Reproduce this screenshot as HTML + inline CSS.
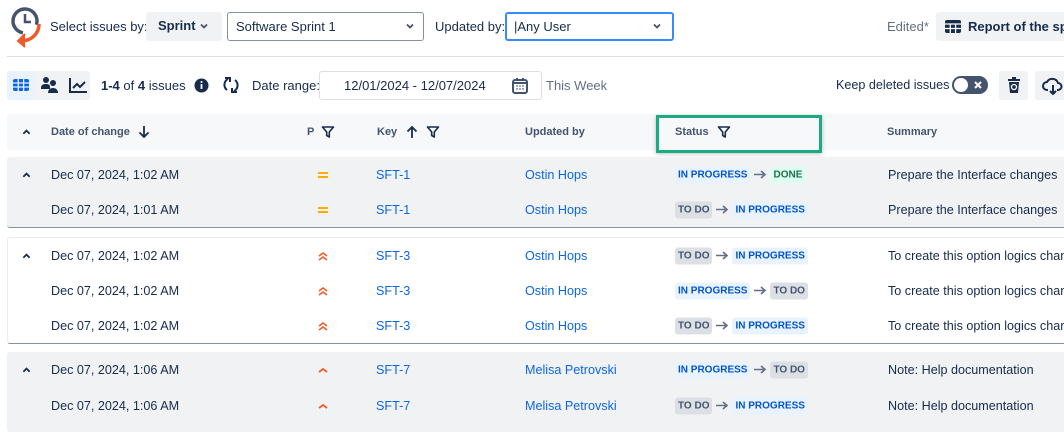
<!DOCTYPE html><html><head><style>
*{box-sizing:border-box;margin:0;padding:0}
body{width:1064px;height:420px;overflow:hidden;background:#fff;font-family:"Liberation Sans",sans-serif;font-size:13px;color:#172b4d;position:relative}
.a{position:absolute;white-space:nowrap}
.btn{background:#f1f2f4;border-radius:3px}
.sel{border:1px solid #8590a2;border-radius:3px;background:#fff}
.hd{font-size:11px;font-weight:bold;color:#44546f}
.grp{position:absolute;left:7px;width:1070px;border-radius:3px}
.row{position:absolute;left:0;width:100%;height:35px;font-size:12.6px}
.row>span{position:absolute;top:50%;transform:translateY(-50%);white-space:nowrap;display:flex;align-items:center}
.lnk{color:#0c66e4}
.lz{font-size:10px;font-weight:bold;padding:3px 3px;border-radius:3px}
.ip{background:#e9f2ff;color:#0055cc}
.td{background:#dcdfe4;color:#44546f}
.dn{background:#dcfff1;color:#216e4e}
.arr{margin:0 3px}
svg{display:block;flex-shrink:0}
</style></head><body>
<svg width="0" height="0" style="position:absolute"><defs>
<symbol id="up" viewBox="0 0 10 6"><path d="M1.5 5L5 1.5 8.5 5" stroke="#172b4d" stroke-width="2" fill="none"/></symbol>
<symbol id="dd" viewBox="0 0 10 6"><path d="M2 1.5L5 4.5 8 1.5" stroke="#44546f" stroke-width="1.8" fill="none"/></symbol>
<symbol id="flt" viewBox="0 0 14 14"><path d="M1.5 2h11L8.3 7v5L5.7 10.5V7z" stroke="#172b4d" stroke-width="1.6" fill="none" stroke-linejoin="round"/></symbol>
<symbol id="med" viewBox="0 0 12 10"><path d="M1 3h10M1 7h10" stroke="#ffab00" stroke-width="2"/></symbol>
<symbol id="hi" viewBox="0 0 12 10"><path d="M2 5l4-3 4 3M2 9l4-3 4 3" stroke="#f15b2a" stroke-width="1.6" fill="none"/></symbol>
<symbol id="hi1" viewBox="0 0 12 10"><path d="M2 7l4-3 4 3" stroke="#f15b2a" stroke-width="1.8" fill="none"/></symbol>
<symbol id="ar" viewBox="0 0 14 10"><path d="M1 5h11M8 1.5L12 5 8 8.5" stroke="#626f86" stroke-width="1.6" fill="none"/></symbol>
</defs></svg>
<svg class="a" style="left:8px;top:4px" width="36" height="44" viewBox="0 0 36 44"><circle cx="17" cy="17" r="12" fill="none" stroke="#44546f" stroke-width="3.5" stroke-dasharray="58 30" transform="rotate(100 17 17)"/><path d="M17 10v8h6" fill="none" stroke="#44546f" stroke-width="2.5"/><path d="M31 20c0 10-8 17-18 17" fill="none" stroke="#f05a28" stroke-width="3.5"/><path d="M17 30l-7 7 7 6" fill="#f05a28" stroke="#f05a28" stroke-width="2"/></svg>
<div class="a" style="left:50px;top:19px">Select issues by:</div>
<div class="a btn" style="left:146px;top:12px;width:76px;height:29px;font-weight:bold;padding:6px 12px">Sprint</div>
<svg class="a" style="left:199px;top:23px" width="10" height="6"><use href="#dd"/></svg>
<div class="a sel" style="left:227px;top:12px;width:197px;height:29px;padding:6px 8px">Software Sprint 1</div>
<svg class="a" style="left:405px;top:23px" width="10" height="6"><use href="#dd"/></svg>
<div class="a" style="left:435px;top:19px">Updated by:</div>
<div class="a sel" style="left:505px;top:12px;width:169px;height:29px;padding:5px 7px;border:2px solid #388bff"><span style="font-weight:100">|</span>Any User</div>
<svg class="a" style="left:652px;top:23px" width="10" height="6"><use href="#dd"/></svg>
<div class="a" style="left:887px;top:19px;color:#626f86">Edited*</div>
<div class="a btn" style="left:936px;top:12px;width:140px;height:29px;padding:6px 8px;font-weight:bold;display:flex;align-items:center"><svg width="18" height="15" style="margin-right:6px"><rect x="1" y="1" width="16" height="13" rx="2" fill="#172b4d"/><path d="M6.3 5v9M11.6 5v9M1 5h16M1 9.5h16" stroke="#fff" stroke-width="1.3"/></svg>Report of the sprint</div>
<div class="a" style="left:7px;top:56px;width:1057px;height:1px;background:#dcdfe4"></div>
<div class="a btn" style="left:7px;top:71px;width:83px;height:29px"></div>
<div class="a" style="left:7px;top:71px;width:27px;height:29px;background:#e9f2ff;border-radius:3px"></div>
<svg class="a" style="left:12px;top:78px" width="18" height="14"><rect x="1" y="1" width="16" height="12" rx="2" fill="#0c66e4"/><path d="M6.3 1v12M11.6 1v12M1 5h16M1 9h16" stroke="#e9f2ff" stroke-width="1.3"/></svg>
<svg class="a" style="left:40px;top:76px" width="20" height="18"><circle cx="6" cy="4" r="3" fill="#172b4d"/><circle cx="13" cy="7" r="3" fill="#172b4d"/><path d="M1 12c0-3 2-4 5-4s4 1 4 3v2H1z" fill="#172b4d"/><path d="M8 17c0-3 2-5 5-5s5 2 5 5z" fill="#172b4d"/></svg>
<svg class="a" style="left:68px;top:76px" width="20" height="18"><path d="M2 2v14h17" fill="none" stroke="#172b4d" stroke-width="2"/><path d="M5 12l4-4 3 3 5-5" fill="none" stroke="#172b4d" stroke-width="2"/></svg>
<div class="a" style="left:101px;top:78px"><b>1-4</b> of <b>4</b> issues</div>
<svg class="a" style="left:194px;top:78px" width="15" height="15"><circle cx="7.5" cy="7.5" r="7" fill="#172b4d"/><rect x="6.6" y="6" width="1.8" height="5" fill="#fff"/><circle cx="7.5" cy="4" r="1" fill="#fff"/></svg>
<svg class="a" style="left:222px;top:76px" width="18" height="18"><path d="M6 3a6.5 6.5 0 0 0-1 11M12 15a6.5 6.5 0 0 0 1-11" fill="none" stroke="#172b4d" stroke-width="2"/><path d="M3 2h5v4M15 16h-5v-4" fill="none" stroke="#172b4d" stroke-width="2"/></svg>
<div class="a" style="left:252px;top:78px">Date range:</div>
<div class="a sel" style="left:319px;top:71px;width:223px;height:29px;border-color:#dcdfe4;padding:6px 24px">12/01/2024 - 12/07/2024</div>
<svg class="a" style="left:512px;top:77px" width="16" height="17"><rect x="1" y="3" width="14" height="13" rx="2" fill="none" stroke="#44546f" stroke-width="2"/><path d="M1 6h14M5 1v3M11 1v3" stroke="#44546f" stroke-width="2"/><path d="M4 9h2M7 9h2M10 9h2M4 12h2M7 12h2M10 12h2" stroke="#44546f"/></svg>
<div class="a" style="left:546px;top:78px;color:#626f86">This Week</div>
<div class="a" style="left:836px;top:78px;font-size:12.6px">Keep deleted issues</div>
<div class="a" style="left:952px;top:76px;width:36px;height:18px;border-radius:9px;background:#44546f"><div style="position:absolute;left:2px;top:2px;width:14px;height:14px;border-radius:7px;background:#fff"></div><svg style="position:absolute;left:22px;top:5px" width="8" height="8"><path d="M1 1l6 6M7 1L1 7" stroke="#fff" stroke-width="2"/></svg></div>
<div class="a btn" style="left:999px;top:71px;width:29px;height:29px"></div>
<svg class="a" style="left:1006px;top:77px" width="16" height="17"><path d="M2 3h12M6 1h4" stroke="#172b4d" stroke-width="2"/><path d="M3 5h10l-1 11H4z" fill="#172b4d"/><circle cx="8" cy="10" r="2.5" fill="none" stroke="#fff" stroke-width="1.3"/></svg>
<div class="a btn" style="left:1035px;top:71px;width:40px;height:29px"></div>
<svg class="a" style="left:1042px;top:77px" width="22" height="18"><path d="M6 13H5a4 4 0 0 1 0-8 6 6 0 0 1 11 1 3.5 3.5 0 0 1 0 7h-1" fill="none" stroke="#172b4d" stroke-width="2"/><path d="M11 8v9M8 14l3 3 3-3" fill="none" stroke="#172b4d" stroke-width="2"/></svg>

<div class="grp" style="top:114px;height:36px;background:#f7f8f9">
<div class="row" style="height:36px">
<span style="left:15px"><svg width="9" height="6"><use href="#up"/></svg></span>
<span class="hd" style="left:44px">Date of change <svg width="14" height="14" style="margin-left:7px"><path d="M7 1v11M2.5 7.5L7 12l4.5-4.5" stroke="#172b4d" stroke-width="1.8" fill="none"/></svg></span>
<span class="hd" style="left:300px">P <svg width="14" height="14" style="margin-left:7px"><use href="#flt"/></svg></span>
<span class="hd" style="left:370px">Key <svg width="14" height="14" style="margin:0 7px 0 8px"><path d="M7 13V2M2.5 6.5L7 2l4.5 4.5" stroke="#172b4d" stroke-width="1.8" fill="none"/></svg><svg width="14" height="14"><use href="#flt"/></svg></span>
<span class="hd" style="left:518px">Updated by</span>
<span class="hd" style="left:668px">Status <svg width="14" height="14" style="margin-left:8px"><use href="#flt"/></svg></span>
<span class="hd" style="left:880px">Summary</span>
</div></div>
<div class="a" style="left:656px;top:115px;width:166px;height:38px;border:3px solid #1aab83;box-shadow:0 1px 4px rgba(0,0,0,.25)"></div>

<div class="grp" style="top:157px;height:71px;background:#f1f2f4;border-bottom:1.5px solid #8590a2">
<div class="row" style="top:0"><span style="left:15px"><svg width="9" height="6"><use href="#up"/></svg></span><span style="left:44px">Dec 07, 2024, 1:02 AM</span><span style="left:310px"><svg width="12" height="10"><use href="#med"/></svg></span><span class="lnk" style="left:369px">SFT-1</span><span class="lnk" style="left:518px">Ostin Hops</span><span style="left:668px"><b class="lz ip">IN PROGRESS</b><svg class="arr" width="14" height="10"><use href="#ar"/></svg><b class="lz dn">DONE</b></span><span style="left:881px">Prepare the Interface changes</span></div>
<div class="row" style="top:35px"><span style="left:44px">Dec 07, 2024, 1:01 AM</span><span style="left:310px"><svg width="12" height="10"><use href="#med"/></svg></span><span class="lnk" style="left:369px">SFT-1</span><span class="lnk" style="left:518px">Ostin Hops</span><span style="left:668px"><b class="lz td">TO DO</b><svg class="arr" width="14" height="10"><use href="#ar"/></svg><b class="lz ip">IN PROGRESS</b></span><span style="left:881px">Prepare the Interface changes</span></div>
</div>

<div class="grp" style="top:237px;height:107px;background:#fff;border:1px solid #ebecf0;border-bottom:1.5px solid #8590a2">
<div class="row" style="top:0"><span style="left:14px"><svg width="9" height="6"><use href="#up"/></svg></span><span style="left:43px">Dec 07, 2024, 1:02 AM</span><span style="left:309px"><svg width="12" height="10"><use href="#hi"/></svg></span><span class="lnk" style="left:368px">SFT-3</span><span class="lnk" style="left:517px">Ostin Hops</span><span style="left:667px"><b class="lz td">TO DO</b><svg class="arr" width="14" height="10"><use href="#ar"/></svg><b class="lz ip">IN PROGRESS</b></span><span style="left:880px">To create this option logics changes</span></div>
<div class="row" style="top:35px"><span style="left:43px">Dec 07, 2024, 1:02 AM</span><span style="left:309px"><svg width="12" height="10"><use href="#hi"/></svg></span><span class="lnk" style="left:368px">SFT-3</span><span class="lnk" style="left:517px">Ostin Hops</span><span style="left:667px"><b class="lz ip">IN PROGRESS</b><svg class="arr" width="14" height="10"><use href="#ar"/></svg><b class="lz td">TO DO</b></span><span style="left:880px">To create this option logics changes</span></div>
<div class="row" style="top:70px"><span style="left:43px">Dec 07, 2024, 1:02 AM</span><span style="left:309px"><svg width="12" height="10"><use href="#hi"/></svg></span><span class="lnk" style="left:368px">SFT-3</span><span class="lnk" style="left:517px">Ostin Hops</span><span style="left:667px"><b class="lz td">TO DO</b><svg class="arr" width="14" height="10"><use href="#ar"/></svg><b class="lz ip">IN PROGRESS</b></span><span style="left:880px">To create this option logics changes</span></div>
</div>

<div class="grp" style="top:352px;height:80px;background:#f1f2f4">
<div class="row" style="top:0"><span style="left:15px"><svg width="9" height="6"><use href="#up"/></svg></span><span style="left:44px">Dec 07, 2024, 1:06 AM</span><span style="left:310px"><svg width="12" height="10"><use href="#hi1"/></svg></span><span class="lnk" style="left:369px">SFT-7</span><span class="lnk" style="left:518px">Melisa Petrovski</span><span style="left:668px"><b class="lz ip">IN PROGRESS</b><svg class="arr" width="14" height="10"><use href="#ar"/></svg><b class="lz td">TO DO</b></span><span style="left:881px">Note: Help documentation</span></div>
<div class="row" style="top:36px"><span style="left:44px">Dec 07, 2024, 1:06 AM</span><span style="left:310px"><svg width="12" height="10"><use href="#hi1"/></svg></span><span class="lnk" style="left:369px">SFT-7</span><span class="lnk" style="left:518px">Melisa Petrovski</span><span style="left:668px"><b class="lz td">TO DO</b><svg class="arr" width="14" height="10"><use href="#ar"/></svg><b class="lz ip">IN PROGRESS</b></span><span style="left:881px">Note: Help documentation</span></div>
</div>
</body></html>
